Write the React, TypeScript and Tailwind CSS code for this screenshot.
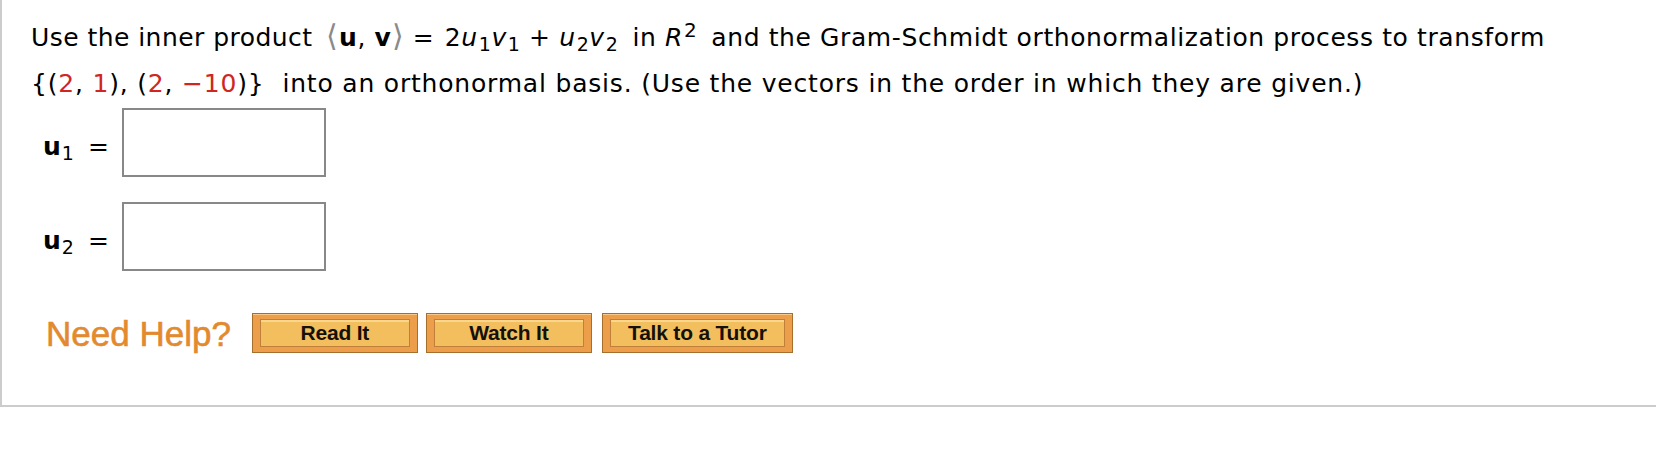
import React from 'react';

function Sub({ children }: { children: React.ReactNode }) {
  return <span className="relative top-[5px] ml-[1px] text-[19px] leading-none">{children}</span>;
}

function HelpButton({ label, width }: { label: string; width: string }) {
  return (
    <button
      type="button"
      className={`${width} h-[40px] border border-[#a66f2e] bg-[#ec9e4a] px-[7px] py-[5px] shadow-[inset_0_1px_0_#f8c98a]`}
    >
      <span className="flex h-full items-center justify-center border border-[#bf813a] bg-[#f3bf5e] shadow-[inset_0_2px_0_#f9d78f] font-['Liberation_Sans',Arial,sans-serif] text-[21px] font-bold tracking-[-0.2px] text-[#151008]">
        {label}
      </span>
    </button>
  );
}

export default function App() {
  return (
    <div className="min-h-[476px] bg-white font-['DejaVu_Sans',Verdana,sans-serif] text-black">
      <div className="border-b-2 border-l-2 border-[#cccccc] pl-[29px] pt-[13px] pb-[52px]">
        {/* question */}
        <p className="text-[25px] leading-[46px] tracking-[0.6px] whitespace-nowrap">
          <span className="tracking-[0.45px]">Use the inner product</span>
          <span className="ml-[14px] text-[30px] font-extralight text-[#8a8a8a]">⟨</span>
          <b>u</b>, <b>v</b>
          <span className="text-[30px] font-extralight text-[#8a8a8a]">⟩</span> ={' '}
          <span className="ml-[2px]">2</span>
          <i>u</i>
          <Sub>1</Sub>
          <i>v</i>
          <Sub>1</Sub> + <i>u</i>
          <Sub>2</Sub>
          <i>v</i>
          <Sub>2</Sub>
          <span className="ml-[14px]">in</span> <i>R</i>
          <span className="relative top-[-9px] ml-[1px] text-[20px] leading-none">2</span>
          <span className="ml-[14px]">and the Gram-Schmidt orthonormalization process to transform</span>
        </p>
        <p className="text-[25px] leading-[46px] tracking-[0.8px] whitespace-nowrap">
          {'{('}
          <span className="text-[#d0261f]">2</span>, <span className="text-[#d0261f]">1</span>), (
          <span className="text-[#d0261f]">2</span>, <span className="text-[#d0261f]">−10</span>
          {')}'}
          <span className="ml-[18px]">into an orthonormal basis. (Use the vectors in the order in which they are given.)</span>
        </p>

        {/* answers */}
        <div className="mt-[1px] flex flex-col gap-[25px]">
          {['1', '2'].map((n) => (
            <div key={n} className="flex items-center">
              <span className="ml-[12px] mt-[8px] w-[79px] text-[25px] leading-none whitespace-nowrap">
                <b>u</b>
                <Sub>{n}</Sub>
                <span className="ml-[14px]">=</span>
              </span>
              <div className="h-[69px] w-[204px] border-2 border-[#888888] bg-white" />
            </div>
          ))}
        </div>

        {/* help */}
        <div className="mt-[42px] flex items-center">
          <span className="ml-[15px] font-['Liberation_Sans',Arial,sans-serif] text-[35px] leading-none text-[#e38a2e] [-webkit-text-stroke:0.6px_#e38a2e]">
            Need Help?
          </span>
          <div className="ml-[21px] flex gap-[8px]">
            <HelpButton label="Read It" width="w-[166px]" />
            <HelpButton label="Watch It" width="w-[166px]" />
            <span className="ml-[2px]">
              <HelpButton label="Talk to a Tutor" width="w-[191px]" />
            </span>
          </div>
        </div>
      </div>
    </div>
  );
}
